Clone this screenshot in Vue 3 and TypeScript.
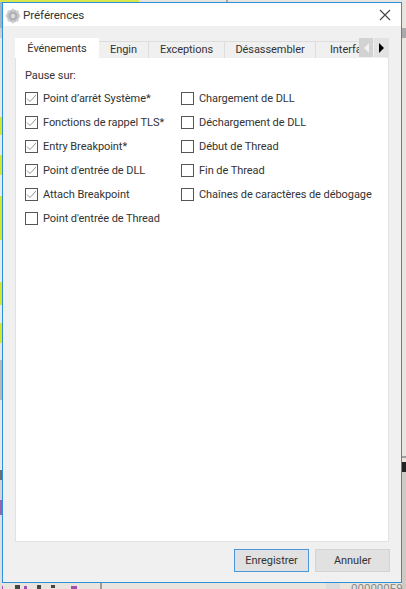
<script setup lang="ts">
const tabs = [
  { label: 'Événements', width: 84, active: true },
  { label: 'Engin', width: 50, active: false },
  { label: 'Exceptions', width: 76, active: false },
  { label: 'Désassembler', width: 91, active: false },
  { label: 'Interface', width: 72, active: false },
]
const leftOptions = [
  { label: 'Point d’arrêt Système*', checked: true },
  { label: 'Fonctions de rappel TLS*', checked: true },
  { label: 'Entry Breakpoint*', checked: true },
  { label: "Point d'entrée de DLL", checked: true },
  { label: 'Attach Breakpoint', checked: true },
  { label: "Point d'entrée de Thread", checked: false },
]
const rightOptions = [
  { label: 'Chargement de DLL', checked: false },
  { label: 'Déchargement de DLL', checked: false },
  { label: 'Début de Thread', checked: false },
  { label: 'Fin de Thread', checked: false },
  { label: 'Chaînes de caractères de débogage', checked: false },
]
const columns = [leftOptions, rightOptions]
</script>

<template>
  <div class="screen">
    <div class="behind-bottom">000000F9</div>
    <section class="dialog">
      <header class="titlebar">
        <svg class="app-icon" width="16" height="16" viewBox="0 0 16 16" aria-hidden="true">
          <circle cx="8" cy="8" r="6.4" fill="#c2c2c6" />
          <g stroke="#cfcfd2" stroke-width="2.6">
            <path d="M8 0.8V15.2M0.8 8H15.2M2.9 2.9L13.1 13.1M13.1 2.9L2.9 13.1" />
          </g>
          <circle cx="8" cy="8" r="4.6" fill="#b0b0b4" />
          <circle cx="8" cy="8" r="2.2" fill="#dcdcde" />
        </svg>
        <span class="title">Préférences</span>
        <svg class="close" width="12" height="12" viewBox="0 0 12 12" aria-hidden="true">
          <path d="M1 1L11 11M11 1L1 11" stroke="#444" stroke-width="1.1" fill="none" />
        </svg>
      </header>

      <main class="content">
        <div class="tabs">
          <div class="tabstrip">
            <div
              v-for="tab in tabs"
              :key="tab.label"
              class="tab"
              :class="{ active: tab.active }"
              :style="{ width: tab.width + 'px' }"
            >{{ tab.label }}</div>
          </div>
          <div class="scroller">
            <div class="scroll-btn prev"><span class="arrow left"></span></div>
            <div class="scroll-btn next"><span class="arrow right"></span></div>
          </div>
        </div>

        <div class="panel">
          <div class="heading">Pause sur:</div>
          <div class="columns">
            <div v-for="(column, i) in columns" :key="i" class="column">
              <label v-for="option in column" :key="option.label" class="option">
                <span class="box">
                  <svg v-if="option.checked" width="13" height="13" viewBox="0 0 13 13" aria-hidden="true">
                    <path d="M2 6.5L5 9.6L11 3" stroke="#949494" stroke-width="1" fill="none" />
                  </svg>
                </span>
                <span class="label">{{ option.label }}</span>
              </label>
            </div>
          </div>
        </div>

        <footer class="actions">
          <button class="btn primary" type="button">Enregistrer</button>
          <button class="btn" type="button">Annuler</button>
        </footer>
      </main>
    </section>
  </div>
</template>

<style scoped>
.screen {
  position: relative;
  width: 406px;
  height: 589px;
  overflow: hidden;
  padding: 2px 0 0 2px;
  box-sizing: border-box;
  font-family: Roboto, "Noto Sans", sans-serif;
  background-color: #e9e4dd;
  background-image:
    linear-gradient(to right, #d9e64a 0 139px, #e6e4de 139px 226px, #a8a8a8 226px 228px, #e9e4dd 228px),
    linear-gradient(to bottom,
      #d4e838 0 2px, #9fb6c0 2px 28px, #cfcfcf 28px 38px, #e8ebe4 38px 117px,
      #d9e62e 117px 135px, #e2edf0 135px 155px, #d9e62e 155px 175px, #e2edf0 175px 196px,
      #d9e62e 196px 240px, #e2edf0 240px 282px, #d9e62e 282px 305px, #e2edf0 305px 323px,
      #d9e62e 323px 343px, #e6e6e6 343px 360px, #b9b9b9 360px 400px, #e8e8e8 400px 470px,
      #6d6d6d 470px 480px, #d8d0d8 480px 500px, #9a62b0 500px 515px, #e2dde2 515px 589px),
    linear-gradient(to bottom,
      #e9e4dd 0 28px, #a9a9a9 28px 38px, #e9e4dd 38px 456px, #a0a0a0 456px 458px,
      #e9e4dd 458px 462px, #222 462px 472px, #cfcac4 472px 589px),
    linear-gradient(#9a9a9a, #9a9a9a),
    linear-gradient(#dcdcdc, #dcdcdc),
    linear-gradient(#444, #444),
    linear-gradient(#444, #444),
    linear-gradient(#444, #444),
    linear-gradient(#a34fb0, #a34fb0),
    linear-gradient(#a34fb0, #a34fb0),
    linear-gradient(#a34fb0, #a34fb0);
  background-size: 406px 2px, 2px 589px, 4px 589px, 2px 6px, 14px 6px,
    5px 4px, 4px 4px, 4px 3px, 3px 3px, 6px 3px, 2px 3px;
  background-position: 0 0, 0 0, 402px 0, 100px 583px, 326px 583px,
    15px 585px, 37px 585px, 51px 585px, 24px 586px, 71px 586px, 1px 586px;
  background-repeat: no-repeat;
}
.behind-bottom {
  position: absolute;
  left: 351px;
  top: 581px;
  font-family: Roboto, sans-serif;
  font-size: 11.5px;
  line-height: 14px;
  color: #888;
}
.dialog {
  position: relative;
  display: flex;
  flex-direction: column;
  width: 400px;
  height: 581px;
  box-sizing: border-box;
  border: 1px solid #2b90d9;
  background: #f0f0f0;
  color: #333;
  font-size: 11px;
  letter-spacing: -0.06px;
}
.titlebar {
  display: flex;
  align-items: center;
  flex: none;
  height: 23px;
  padding: 0 10px 0 2px;
  background: #fff;
}
.app-icon { flex: none; margin-top: 2px; }
.title {
  margin-left: 2px;
  flex: 1;
  font-size: 11.6px;
  color: #333;
}
.close { flex: none; }
.content {
  position: relative;
  flex: 1;
  display: flex;
  flex-direction: column;
  padding: 12px 12px 0;
  min-height: 0;
}
.tabs {
  position: relative;
  flex: none;
  height: 20px;
  overflow: hidden;
}
.tabstrip {
  display: flex;
  align-items: flex-end;
  height: 20px;
}
.tab {
  flex: none;
  box-sizing: border-box;
  height: 17px;
  line-height: 16px;
  text-align: center;
  border: 1px solid #dddddd;
  border-width: 1px 1px 0 0;
  background: #f0f0f0;
  color: #333;
}
.tab.active {
  height: 20px;
  line-height: 21px;
  background: #fff;
  border: none;
}
.scroller {
  position: absolute;
  right: 0;
  top: 0;
  display: flex;
  gap: 1px;
}
.scroll-btn {
  display: flex;
  align-items: center;
  justify-content: center;
  width: 14px;
  height: 19px;
}
.prev { background: #d2d2d2; }
.next { background: #e2e2e2; width: 15px; }
.arrow {
  width: 0;
  height: 0;
  border-top: 5px solid transparent;
  border-bottom: 5px solid transparent;
}
.arrow.left { border-right: 5px solid #f2f2f2; }
.arrow.right { border-left: 5px solid #000; }
.panel {
  flex: none;
  height: 484px;
  box-sizing: border-box;
  padding: 10px 9px 0;
  background: #fff;
  border: 1px solid #e2e2e2;
  border-top: none;
}
.heading {
  height: 16px;
  line-height: 16px;
  margin-bottom: 2px;
}
.columns {
  display: flex;
}
.column {
  display: flex;
  flex-direction: column;
}
.column:first-child { width: 156px; }
.option {
  display: flex;
  align-items: center;
  height: 24px;
}
.box {
  flex: none;
  box-sizing: border-box;
  width: 13px;
  height: 13px;
  border: 1px solid #555;
  background: #fff;
  display: flex;
  align-items: center;
  justify-content: center;
}
.box svg { flex: none; }
.label {
  margin-left: 5px;
  white-space: nowrap;
}
.actions {
  display: flex;
  justify-content: flex-end;
  gap: 6px;
  padding: 7px 0 0;
  margin-right: -1px;
}
.btn {
  width: 75px;
  height: 23px;
  box-sizing: border-box;
  padding: 0;
  font: inherit;
  letter-spacing: inherit;
  color: #333;
  background: #e1e1e1;
  border: 1px solid #d4d4d4;
}
.btn.primary {
  border: 1.5px solid #4a98da;
}
</style>
